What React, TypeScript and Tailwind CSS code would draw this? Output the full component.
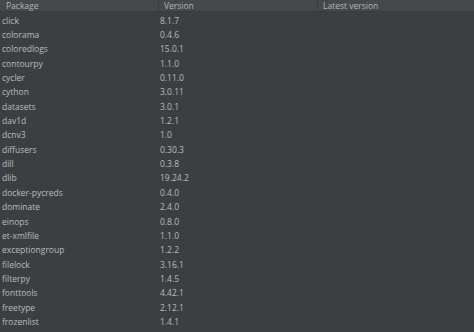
import React from "react";

const rows: [string, string][] = [
  ["click", "8.1.7"],
  ["colorama", "0.4.6"],
  ["coloredlogs", "15.0.1"],
  ["contourpy", "1.1.0"],
  ["cycler", "0.11.0"],
  ["cython", "3.0.11"],
  ["datasets", "3.0.1"],
  ["dav1d", "1.2.1"],
  ["dcnv3", "1.0"],
  ["diffusers", "0.30.3"],
  ["dill", "0.3.8"],
  ["dlib", "19.24.2"],
  ["docker-pycreds", "0.4.0"],
  ["dominate", "2.4.0"],
  ["einops", "0.8.0"],
  ["et-xmlfile", "1.1.0"],
  ["exceptiongroup", "1.2.2"],
  ["filelock", "3.16.1"],
  ["filterpy", "1.4.5"],
  ["fonttools", "4.42.1"],
  ["freetype", "2.12.1"],
  ["frozenlist", "1.4.1"],
];

export default function App() {
  return (
    <div className="w-[474px] h-[332px] overflow-hidden bg-[#3c3f41] text-[#bbbbbb] text-[8.5px] leading-none font-['Open_Sans','Noto_Sans',sans-serif]">
      <div className="flex h-[12px] bg-[#45494b] border-b border-[#393b3d] text-[#b5b5b5]">
        <div className="w-[159px] border-r border-[#3a3d3f] pl-[6px] flex items-end pb-[1px]">Package</div>
        <div className="w-[159px] border-r border-[#3a3d3f] pl-[5px] flex items-end pb-[1px]">Version</div>
        <div className="flex-1 pl-[5px] flex items-end pb-[1px]">Latest version</div>
      </div>
      <div className="flex flex-col pt-[1.6px]">
        {rows.map(([p, v]) => (
          <div key={p} className="flex h-[14.37px] items-center">
            <div className="w-[160px] pl-[2px]">{p}</div>
            <div className="w-[159px]">{v}</div>
            <div className="flex-1"></div>
          </div>
        ))}
      </div>
    </div>
  );
}
